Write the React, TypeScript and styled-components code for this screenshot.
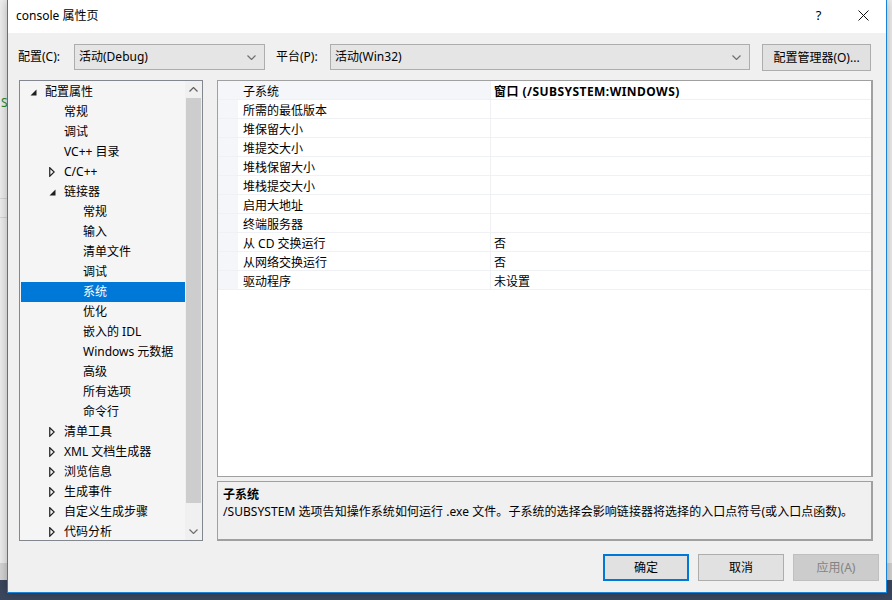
import React from "react";
import styled, { createGlobalStyle } from "styled-components";

const FONT = `"Noto Sans", "Noto Sans CJK SC", sans-serif`;

const TREE_ITEMS: { label: string; level: number; arrow?: "open" | "closed"; selected?: boolean }[] = [
  { label: "配置属性", level: 0, arrow: "open" },
  { label: "常规", level: 1 },
  { label: "调试", level: 1 },
  { label: "VC++ 目录", level: 1 },
  { label: "C/C++", level: 1, arrow: "closed" },
  { label: "链接器", level: 1, arrow: "open" },
  { label: "常规", level: 2 },
  { label: "输入", level: 2 },
  { label: "清单文件", level: 2 },
  { label: "调试", level: 2 },
  { label: "系统", level: 2, selected: true },
  { label: "优化", level: 2 },
  { label: "嵌入的 IDL", level: 2 },
  { label: "Windows 元数据", level: 2 },
  { label: "高级", level: 2 },
  { label: "所有选项", level: 2 },
  { label: "命令行", level: 2 },
  { label: "清单工具", level: 1, arrow: "closed" },
  { label: "XML 文档生成器", level: 1, arrow: "closed" },
  { label: "浏览信息", level: 1, arrow: "closed" },
  { label: "生成事件", level: 1, arrow: "closed" },
  { label: "自定义生成步骤", level: 1, arrow: "closed" },
  { label: "代码分析", level: 1, arrow: "closed" },
];

const PROPS: { name: string; value?: string; bold?: boolean; current?: boolean }[] = [
  { name: "子系统", value: "窗口 (/SUBSYSTEM:WINDOWS)", bold: true, current: true },
  { name: "所需的最低版本" },
  { name: "堆保留大小" },
  { name: "堆提交大小" },
  { name: "堆栈保留大小" },
  { name: "堆栈提交大小" },
  { name: "启用大地址" },
  { name: "终端服务器" },
  { name: "从 CD 交换运行", value: "否" },
  { name: "从网络交换运行", value: "否" },
  { name: "驱动程序", value: "未设置" },
];

const GlobalStyle = createGlobalStyle`
  body {
    margin: 0;
    background: #eeeeee;
    font-family: ${FONT};
  }
`;

const Screen = styled.div`
  width: 892px;
  height: 600px;
  overflow: hidden;
  display: flex;
  background: linear-gradient(
    to bottom,
    #eeeeee 0,
    #eeeeee 563px,
    #d4d4d4 563px,
    #d4d4d4 580px,
    #3b475e 580px
  );
`;

const SideStrip = styled.div`
  width: 7px;
  flex-shrink: 0;
  display: flex;
  flex-direction: column;
  overflow: hidden;
`;

const StripGlyph = styled.div`
  margin-top: 96px;
  margin-left: 1px;
  font-size: 12px;
  line-height: 14px;
  color: #1f8a2a;
`;

const StripLine = styled.div<{ $top: number }>`
  margin-top: ${(p) => p.$top}px;
  height: 1px;
  background: #d6d6d6;
`;

const Dialog = styled.div`
  width: 878px;
  height: 592px;
  flex-shrink: 0;
  display: flex;
  flex-direction: column;
  background: #f0f0f0;
  border: 1px solid #1883d7;
  border-top: none;
  box-shadow: 0 0 10px rgba(0, 0, 0, 0.28);
  font-size: 12px;
  color: #000;
`;

const TitleBar = styled.div`
  height: 33px;
  flex-shrink: 0;
  display: flex;
  align-items: center;
  background: #ffffff;
  padding-left: 8px;
`;

const Title = styled.div`
  flex: 1;
  font-size: 12px;
  line-height: 16px;
  margin-top: -2px;
`;

const TitleButton = styled.div`
  width: 45px;
  height: 30px;
  display: flex;
  align-items: center;
  justify-content: center;
  font-size: 13px;
  margin-top: -3px;
`;

const ConfigRow = styled.div`
  margin-top: 11px;
  height: 27px;
  display: flex;
  align-items: flex-start;
  padding-left: 10px;
`;

const FieldLabel = styled.div<{ $width: number; $gap?: number }>`
  width: ${(p) => p.$width}px;
  margin-left: ${(p) => p.$gap ?? 0}px;
  height: 26px;
  display: flex;
  align-items: center;
  line-height: 16px;
`;

const Combo = styled.div<{ $width: number }>`
  width: ${(p) => p.$width}px;
  height: 26px;
  box-sizing: border-box;
  border: 1px solid #adadad;
  background: #e5e5e5;
  display: flex;
  align-items: center;
  padding: 0 8px 0 4px;
`;

const ComboText = styled.div`
  flex: 1;
  line-height: 16px;
`;

const PushButton = styled.div<{ $width: number; $variant?: "default" | "disabled"; $gap?: number }>`
  width: ${(p) => p.$width}px;
  height: 27px;
  margin-left: ${(p) => p.$gap ?? 0}px;
  box-sizing: border-box;
  display: flex;
  align-items: center;
  justify-content: center;
  line-height: 16px;
  border: ${(p) =>
    p.$variant === "default" ? "2px solid #0078d7" : p.$variant === "disabled" ? "1px solid #bfbfbf" : "1px solid #adadad"};
  background: ${(p) => (p.$variant === "disabled" ? "#cccccc" : "#e1e1e1")};
  color: ${(p) => (p.$variant === "disabled" ? "#838383" : "#000")};
`;

const Main = styled.div`
  margin-top: 9px;
  display: flex;
  padding-left: 11px;
  gap: 14px;
  height: 461px;
`;

const Tree = styled.div`
  width: 184px;
  box-sizing: border-box;
  border: 1px solid #828790;
  background: #f5f5f5;
  display: flex;
  overflow: hidden;
`;

const TreeList = styled.div`
  flex: 1;
  display: flex;
  flex-direction: column;
  overflow: hidden;
  padding-top: 1px;
`;

const TreeRow = styled.div<{ $level: number; $selected?: boolean }>`
  height: 20px;
  flex-shrink: 0;
  display: flex;
  align-items: center;
  padding-left: ${(p) => 7 + p.$level * 19}px;
  margin-left: 1px;
  background: ${(p) => (p.$selected ? "#0078d7" : "transparent")};
  color: ${(p) => (p.$selected ? "#ffffff" : "#000")};
  line-height: 16px;
  white-space: nowrap;
`;

const ArrowSlot = styled.div`
  width: 17px;
  height: 20px;
  display: flex;
  align-items: center;
  padding-left: 2px;
  box-sizing: border-box;
`;

const ScrollBar = styled.div`
  width: 17px;
  flex-shrink: 0;
  display: flex;
  flex-direction: column;
  background: #f0f0f0;
`;

const ScrollButton = styled.div`
  height: 17px;
  display: flex;
  align-items: center;
  justify-content: center;
`;

const ScrollThumb = styled.div`
  height: 405px;
  margin: 0 1px;
  background: #cdcdcd;
`;

const ScrollTrack = styled.div`
  flex: 1;
`;

const RightColumn = styled.div`
  width: 656px;
  display: flex;
  flex-direction: column;
  gap: 4px;
`;

const Grid = styled.div`
  height: 397px;
  box-sizing: border-box;
  border: 1px solid #a0a0a0;
  border-right-width: 2px;
  background: #ffffff;
  display: flex;
  flex-direction: column;
`;

const GridRow = styled.div`
  height: 19px;
  flex-shrink: 0;
  display: flex;
  box-sizing: border-box;
  border-bottom: 1px solid #f0f1f4;
`;

const Gutter = styled.div`
  width: 20px;
  background: #f4f6fa;
`;

const NameCell = styled.div<{ $current?: boolean }>`
  width: 253px;
  padding: 3px 0 0 5px;
  box-sizing: border-box;
  line-height: 16px;
  background: ${(p) => (p.$current ? "#f4f6fa" : "#ffffff")};
  border-right: 1px solid #f0f1f4;
`;

const ValueCell = styled.div<{ $bold?: boolean }>`
  flex: 1;
  padding: 3px 0 0 3px;
  line-height: 16px;
  font-weight: ${(p) => (p.$bold ? 700 : 400)};
  letter-spacing: ${(p) => (p.$bold ? "0.45px" : "0")};
`;

const Description = styled.div`
  height: 60px;
  box-sizing: border-box;
  border: 1px solid #a0a0a0;
  border-bottom-width: 2px;
  border-right-width: 2px;
  padding: 5px 5px 4px;
  display: flex;
  flex-direction: column;
  gap: 1px;
`;

const DescTitle = styled.div`
  font-weight: 700;
  line-height: 16px;
`;

const DescText = styled.div`
  line-height: 16px;
  white-space: nowrap;
  letter-spacing: 0.05px;
`;

const Footer = styled.div`
  margin-top: 13px;
  display: flex;
  justify-content: flex-end;
  gap: 9px;
  padding-right: 7px;
`;

const Chevron = ({ dir = "down" }: { dir?: "down" | "up" }) => (
  <svg width="9" height="5" viewBox="0 0 9 5">
    <path
      d={dir === "down" ? "M0.5 0.5 L4.5 4.5 L8.5 0.5" : "M0.5 4.5 L4.5 0.5 L8.5 4.5"}
      fill="none"
      stroke={dir === "down" ? "#707070" : "#606060"}
      strokeWidth="1.2"
    />
  </svg>
);

const TreeArrow = ({ kind }: { kind: "open" | "closed" }) =>
  kind === "open" ? (
    <svg width="7" height="7" viewBox="0 0 7 7">
      <path d="M6.5 0.5 L6.5 6.5 L0.5 6.5 Z" fill="#1e1e1e" />
    </svg>
  ) : (
    <svg width="6" height="10" viewBox="0 0 6 10">
      <path d="M0.75 0.75 L5.25 5 L0.75 9.25 Z" fill="none" stroke="#1e1e1e" strokeWidth="1.2" />
    </svg>
  );

const CloseIcon = () => (
  <svg width="11" height="11" viewBox="0 0 11 11">
    <path d="M0.5 0.5 L10.5 10.5 M10.5 0.5 L0.5 10.5" stroke="#111" strokeWidth="1" />
  </svg>
);

export default function App() {
  return (
    <>
      <GlobalStyle />
      <Screen>
        <SideStrip>
          <StripGlyph>S</StripGlyph>
          <StripLine $top={88} />
          <StripLine $top={18} />
        </SideStrip>
        <Dialog>
          <TitleBar>
            <Title>console 属性页</Title>
            <TitleButton>?</TitleButton>
            <TitleButton>
              <CloseIcon />
            </TitleButton>
          </TitleBar>

          <ConfigRow>
            <FieldLabel $width={56}>配置(C):</FieldLabel>
            <Combo $width={191}>
              <ComboText>活动(Debug)</ComboText>
              <Chevron />
            </Combo>
            <FieldLabel $width={54} $gap={11}>
              平台(P):
            </FieldLabel>
            <Combo $width={420}>
              <ComboText>活动(Win32)</ComboText>
              <Chevron />
            </Combo>
            <PushButton $width={109} $gap={12}>
              配置管理器(O)...
            </PushButton>
          </ConfigRow>

          <Main>
            <Tree>
              <TreeList>
                {TREE_ITEMS.map((item, i) => (
                  <TreeRow key={i} $level={item.level} $selected={item.selected}>
                    <ArrowSlot>{item.arrow && <TreeArrow kind={item.arrow} />}</ArrowSlot>
                    {item.label}
                  </TreeRow>
                ))}
              </TreeList>
              <ScrollBar>
                <ScrollButton>
                  <Chevron dir="up" />
                </ScrollButton>
                <ScrollThumb />
                <ScrollTrack />
                <ScrollButton>
                  <Chevron />
                </ScrollButton>
              </ScrollBar>
            </Tree>

            <RightColumn>
              <Grid>
                {PROPS.map((p) => (
                  <GridRow key={p.name}>
                    <Gutter />
                    <NameCell $current={p.current}>{p.name}</NameCell>
                    <ValueCell $bold={p.bold}>{p.value}</ValueCell>
                  </GridRow>
                ))}
              </Grid>
              <Description>
                <DescTitle>子系统</DescTitle>
                <DescText>
                  /SUBSYSTEM 选项告知操作系统如何运行 .exe 文件。子系统的选择会影响链接器将选择的入口点符号(或入口点函数)。
                </DescText>
              </Description>
            </RightColumn>
          </Main>

          <Footer>
            <PushButton $width={86} $variant="default">
              确定
            </PushButton>
            <PushButton $width={86}>取消</PushButton>
            <PushButton $width={86} $variant="disabled">
              应用(A)
            </PushButton>
          </Footer>
        </Dialog>
      </Screen>
    </>
  );
}
